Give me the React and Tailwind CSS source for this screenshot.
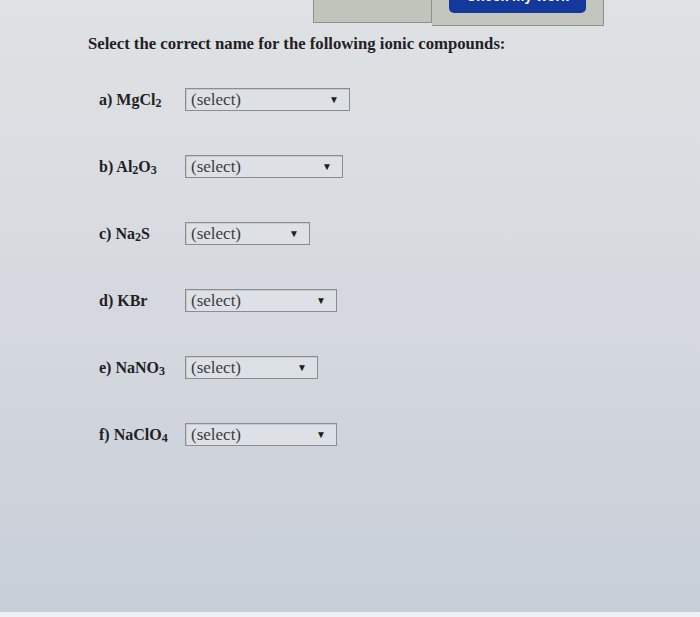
import { useState } from 'react';

const rows = [
  { key: 'a', formula: ['MgCl', '2'], width: 165 },
  { key: 'b', formula: ['Al', '2', 'O', '3'], width: 158 },
  { key: 'c', formula: ['Na', '2', 'S'], width: 125 },
  { key: 'd', formula: ['KBr'], width: 152 },
  { key: 'e', formula: ['NaNO', '3'], width: 133 },
  { key: 'f', formula: ['NaClO', '4'], width: 152 },
];

// alternate pieces: even index = normal text, odd index = subscript
function Formula({ parts }) {
  return (
    <span>
      {parts.map((p, i) =>
        i % 2 === 1 ? (
          <sub key={i} className="text-[12px] relative top-[2px]">{p}</sub>
        ) : (
          <span key={i}>{p}</span>
        )
      )}
    </span>
  );
}

function SelectBox({ width }) {
  const [value] = useState('(select)');
  return (
    <div
      className="h-[23px] border border-[#8a8d92] bg-[#dde1e6] flex items-center justify-between pl-[5px] pr-[10px] shadow-[inset_1px_1px_0_#c6cacf]"
      style={{ width }}
    >
      <span className="text-[17px] text-[#3a3c40] leading-none">{value}</span>
      <span className="text-[10px] text-[#1d1f22] leading-none">▼</span>
    </div>
  );
}

function App() {
  return (
    <div
      className="w-[700px] h-[617px] overflow-hidden flex flex-col bg-gradient-to-b from-[#dfe2e4] via-[#d5d9df] to-[#c8ced8] text-[#1f2124]"
      style={{ fontFamily: '"Liberation Serif", "Times New Roman", serif' }}
    >
      <div className="h-[26px] flex items-start pl-[313px] overflow-hidden shrink-0">
        <div className="w-[119px] h-[23px] bg-[#c1c4bb] border border-t-0 border-[#8e918a]" />
        <div className="w-[172px] h-[26px] bg-[#c3c6be] border border-t-0 border-l-0 border-[#8e918a] flex justify-center">
          <div
            className="w-[137px] h-[30px] -mt-[17px] bg-[#15389b] rounded-[5px] flex items-end justify-center pb-[10px] text-white font-bold text-[14px] leading-none"
            style={{ fontFamily: '"Liberation Sans", Arial, sans-serif' }}
          >
            Check my work
          </div>
        </div>
      </div>

      <div className="mt-[8px] pl-[88px] text-[16.7px] font-bold leading-[20px]">
        Select the correct name for the following ionic compounds:
      </div>

      <div className="mt-[12px] flex flex-col">
        {rows.map((r) => (
          <div key={r.key} className="h-[67px] flex items-center pl-[99px]">
            <div className="w-[86px] text-[16px] font-bold leading-none">
              {r.key}) <Formula parts={r.formula} />
            </div>
            <SelectBox width={r.width} />
          </div>
        ))}
      </div>

      <div className="flex-1" />
      <div className="h-[5px] bg-[#eef0f3] shrink-0" />
    </div>
  );
}

export default App;
